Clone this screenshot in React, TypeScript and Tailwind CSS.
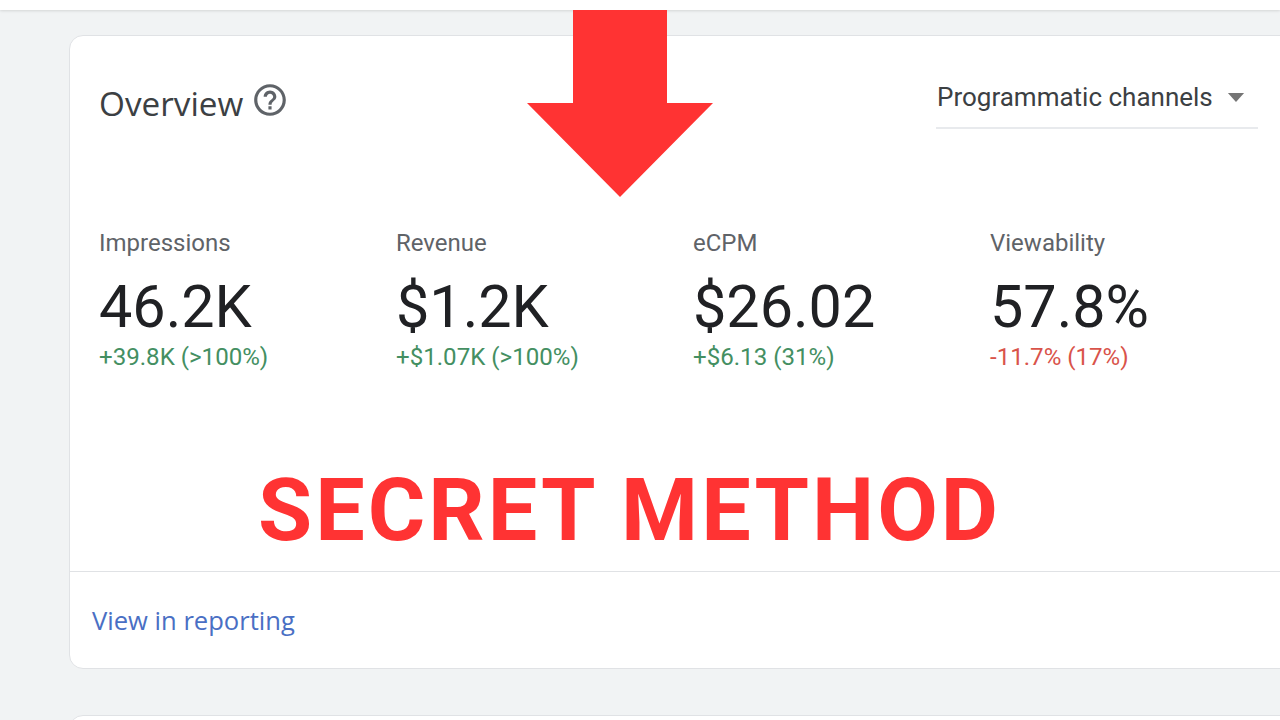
// overview card from the ad manager home page
const metrics = [
  { label: "Impressions", value: "46.2K", change: "+39.8K (>100%)", up: true },
  { label: "Revenue", value: "$1.2K", change: "+$1.07K (>100%)", up: true },
  { label: "eCPM", value: "$26.02", change: "+$6.13 (31%)", up: true },
  { label: "Viewability", value: "57.8%", change: "-11.7% (17%)", up: false },
];

export default function App() {
  return (
    <div className="relative w-[1280px] h-[720px] overflow-hidden bg-[#f1f3f4] font-['Roboto',sans-serif]">
      {/* top bar */}
      <div className="h-[10px] bg-white shadow-[0_1px_3px_rgba(0,0,0,0.12)]" />

      <div className="pl-[69px] pt-[25px]">
        {/* main card */}
        <div className="w-[1260px] h-[634px] bg-white border border-[#e0e2e5] rounded-[14px] flex flex-col">
          <div className="h-[536px] border-b border-[#e0e2e5] pl-[29px] shrink-0">
            {/* header */}
            <div className="flex justify-between w-[1159px] h-[193px]">
              <div className="flex items-start gap-[8px] pt-[47px]">
                <span className="font-['Open_Sans',sans-serif] text-[33.3px] leading-[40px] text-[#3c4043]">Overview</span>
                <svg className="-mt-[2px]" width="38" height="38" viewBox="0 0 24 24" fill="#5f6368">
                  <path d="M11 18h2v-2h-2v2zm1-16C6.48 2 2 6.48 2 12s4.48 10 10 10 10-4.48 10-10S17.52 2 12 2zm0 18c-4.41 0-8-3.59-8-8s3.59-8 8-8 8 3.59 8 8-3.59 8-8 8zm0-14c-2.21 0-4 1.79-4 4h2c0-1.1.9-2 2-2s2 .9 2 2c0 2-3 1.75-3 5h2c0-2.25 3-2.5 3-5 0-2.21-1.79-4-4-4z" />
                </svg>
              </div>
              <div className="w-[322px] h-[93px] pt-[44px] border-b-2 border-[#e8eaed] flex items-start">
                <span className="text-[26px] leading-[34px] text-[#3c4043] ml-px">Programmatic channels</span>
                <svg className="ml-[14px] mt-[13px]" width="18" height="9" viewBox="0 0 20 10" fill="#757575">
                  <path d="M1 0h18l-9 10z" />
                </svg>
              </div>
            </div>

            {/* metrics */}
            <div className="flex">
              {metrics.map((m) => (
                <div key={m.label} className="w-[297px]">
                  <div className="text-[24px] leading-[28px] text-[#5f6368]">{m.label}</div>
                  <div className="mt-[17px] text-[59.3px] leading-[66px] text-[#202124]">{m.value}</div>
                  <div className={`mt-[3px] text-[24.1px] leading-[28px] ${m.up ? "text-[#448f62]" : "text-[#d9534a]"}`}>{m.change}</div>
                </div>
              ))}
            </div>
          </div>

          <div className="pl-[22px] pt-[33px]">
            <span className="font-['Open_Sans',sans-serif] text-[25.6px] leading-[32px] text-[#4a6fc4]">View in reporting</span>
          </div>
        </div>

        {/* next card, cut off by the window */}
        <div className="w-[1260px] h-[60px] mt-[46px] bg-white border border-[#e0e2e5] rounded-[14px]" />
      </div>

      {/* thumbnail overlays */}
      <svg className="absolute left-[527px] top-[10px]" width="186" height="188" viewBox="0 0 186 188" fill="#ff3333">
        <path d="M46 0h94v93h46l-93 94-93-94h46z" />
      </svg>
      <div className="absolute left-[258px] top-[458px] font-['Roboto',sans-serif] font-bold text-[88px] leading-[104px] tracking-[3px] text-[#ff3333] whitespace-nowrap">
        SECRET METHOD
      </div>
    </div>
  );
}
